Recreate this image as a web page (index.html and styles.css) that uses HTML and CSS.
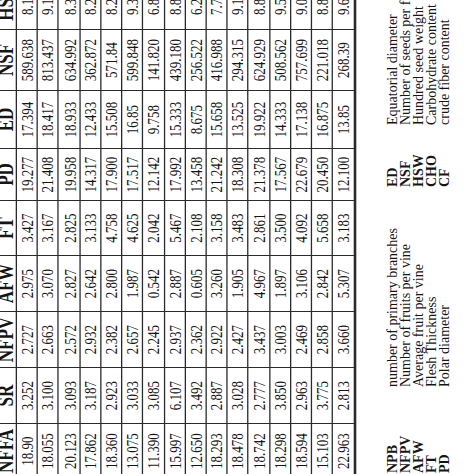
FILE: index.html
```html
<!DOCTYPE html>
<html>
<head>
<meta charset="utf-8">
<link rel="stylesheet" href="styles.css">
</head>
<body>
<div class="page">
  <div class="sheet">
    <div class="table">
      <div class="th">NFFA</div><div class="th">SR</div><div class="th">NFPV</div><div class="th">AFW</div><div class="th">FT</div><div class="th">PD</div><div class="th">ED</div><div class="th">NSF</div><div class="th">HSW</div>

      <div class="td">18.90</div><div class="td">3.252</div><div class="td">2.727</div><div class="td">2.975</div><div class="td">3.427</div><div class="td">19.277</div><div class="td">17.394</div><div class="td">589.638</div><div class="td cut">8.1</div>
      <div class="td">18.055</div><div class="td">3.100</div><div class="td">2.663</div><div class="td">3.070</div><div class="td">3.167</div><div class="td">21.408</div><div class="td">18.417</div><div class="td">813.437</div><div class="td cut">9.1</div>
      <div class="td">20.123</div><div class="td">3.093</div><div class="td">2.572</div><div class="td">2.827</div><div class="td">2.825</div><div class="td">19.958</div><div class="td">18.933</div><div class="td">634.992</div><div class="td cut">8.3</div>
      <div class="td">17.862</div><div class="td">3.187</div><div class="td">2.932</div><div class="td">2.642</div><div class="td">3.133</div><div class="td">14.317</div><div class="td">12.433</div><div class="td">362.872</div><div class="td cut">8.2</div>
      <div class="td">18.360</div><div class="td">2.923</div><div class="td">2.382</div><div class="td">2.800</div><div class="td">4.758</div><div class="td">17.900</div><div class="td">15.508</div><div class="td">571.84</div><div class="td cut">8.2</div>
      <div class="td">13.075</div><div class="td">3.033</div><div class="td">2.657</div><div class="td">1.987</div><div class="td">4.625</div><div class="td">17.517</div><div class="td">16.85</div><div class="td">599.848</div><div class="td cut">9.3</div>
      <div class="td">11.390</div><div class="td">3.085</div><div class="td">2.245</div><div class="td">0.542</div><div class="td">2.042</div><div class="td">12.142</div><div class="td">9.758</div><div class="td">141.820</div><div class="td cut">6.8</div>
      <div class="td">15.997</div><div class="td">6.107</div><div class="td">2.937</div><div class="td">2.887</div><div class="td">5.467</div><div class="td">17.992</div><div class="td">15.333</div><div class="td">439.180</div><div class="td cut">8.8</div>
      <div class="td">12.650</div><div class="td">3.492</div><div class="td">2.362</div><div class="td">0.605</div><div class="td">2.108</div><div class="td">13.458</div><div class="td">8.675</div><div class="td">256.522</div><div class="td cut">6.2</div>
      <div class="td">18.293</div><div class="td">2.887</div><div class="td">2.922</div><div class="td">3.260</div><div class="td">3.158</div><div class="td">21.242</div><div class="td">15.658</div><div class="td">416.988</div><div class="td cut">7.7</div>
      <div class="td">18.478</div><div class="td">3.028</div><div class="td">2.427</div><div class="td">1.905</div><div class="td">3.483</div><div class="td">18.308</div><div class="td">13.525</div><div class="td">294.315</div><div class="td cut">9.1</div>
      <div class="td">18.742</div><div class="td">2.777</div><div class="td">3.437</div><div class="td">4.967</div><div class="td">2.861</div><div class="td">21.378</div><div class="td">19.922</div><div class="td">624.929</div><div class="td cut">8.8</div>
      <div class="td">18.298</div><div class="td">3.850</div><div class="td">3.003</div><div class="td">1.897</div><div class="td">3.500</div><div class="td">17.567</div><div class="td">14.333</div><div class="td">508.562</div><div class="td cut">9.5</div>
      <div class="td">18.594</div><div class="td">2.963</div><div class="td">2.469</div><div class="td">3.106</div><div class="td">4.092</div><div class="td">22.679</div><div class="td">17.138</div><div class="td">757.699</div><div class="td cut">9.0</div>
      <div class="td">15.103</div><div class="td">3.775</div><div class="td">2.858</div><div class="td">2.842</div><div class="td">5.658</div><div class="td">20.450</div><div class="td">16.875</div><div class="td">221.018</div><div class="td cut">8.8</div>
      <div class="td">22.963</div><div class="td">2.813</div><div class="td">3.660</div><div class="td">5.307</div><div class="td">3.183</div><div class="td">12.100</div><div class="td">13.85</div><div class="td">268.39</div><div class="td cut">9.6</div>
    </div>

    <div class="legend">
      <div class="ab">NPB</div><div class="desc">number of primary branches</div><div class="ab">ED</div><div class="desc">Equatorial diameter</div>
      <div class="ab">NFPV</div><div class="desc">Number of fruits per vine</div><div class="ab">NSF</div><div class="desc">Number of seeds per fruit</div>
      <div class="ab">AFW</div><div class="desc">Average fruit per vine</div><div class="ab">HSW</div><div class="desc">Hundred seed weight</div>
      <div class="ab">FT</div><div class="desc">Flesh Thickness</div><div class="ab">CHO</div><div class="desc">Carbohydrate content</div>
      <div class="ab">PD</div><div class="desc">Polar diameter</div><div class="ab">CF</div><div class="desc">crude fiber content</div>
    </div>
  </div>
</div>
</body>
</html>
```

FILE: styles.css
```css
html, body {
  margin: 0;
  padding: 0;
  background: #ffffff;
  overflow: hidden;
}

.page {
  width: 474px;
  height: 474px;
  overflow: hidden;
  background: #ffffff;
}

.sheet {
  width: 474px;
  height: 474px;
  overflow: hidden;
  background: #ffffff;
  transform-origin: 0 0;
  transform: translate(0, 474px) rotate(-90deg);
  font-family: "Liberation Serif", "Times New Roman", serif;
  color: #151515;
}

/* the table is printed squeezed: its glyphs are taller than they are wide */
.table {
  display: grid;
  grid-template-columns: 54px 55px 55px 55px 54px 51px 57px 60px 56px;
  grid-template-rows: 20px repeat(16, 15.23px);
  gap: 1px;
  background: #2a2a2a;
  padding-bottom: 2px;
  margin-top: -7.65px;
  margin-left: -4px;
  width: max-content;
  transform-origin: 0 7.65px;
  transform: scaleY(1.3);
}

.th {
  background: #ffffff;
  display: flex;
  align-items: flex-end;
  justify-content: center;
  font-weight: bold;
  font-size: 17px;
  line-height: 15px;
  white-space: nowrap;
}

.td {
  background: #ffffff;
  display: flex;
  align-items: center;
  justify-content: center;
  font-size: 13px;
  line-height: 15px;
  white-space: nowrap;
}

.td.cut {
  justify-content: flex-start;
  padding-left: 14px;
}

.legend {
  display: grid;
  grid-template-columns: 86px 200px 62px auto;
  grid-auto-rows: 13px;
  margin-top: 111.8px;
  margin-left: 1px;
  font-size: 14px;
  line-height: 13px;
  white-space: nowrap;
}

.ab {
  font-weight: bold;
}
```
